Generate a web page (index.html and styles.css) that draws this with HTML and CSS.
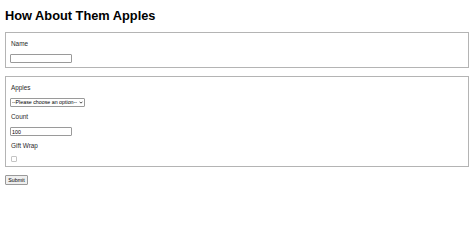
FILE: index.html
```html
<!DOCTYPE html>
<html lang="en">
<head>
<meta charset="utf-8">
<title>How About Them Apples</title>
<link rel="stylesheet" href="styles.css">
</head>
<body>
<h1 class="title">How About Them Apples</h1>
<form class="order-form">
  <fieldset class="group">
    <div class="field">
      <label class="field-label" for="name">Name</label>
      <input class="text-input" id="name" type="text">
    </div>
  </fieldset>
  <fieldset class="group">
    <div class="field">
      <label class="field-label" for="apples">Apples</label>
      <span class="select-wrap">
        <select class="select-input" id="apples">
          <option>--Please choose an option--</option>
        </select>
        <svg class="select-arrow" viewBox="0 0 6 4" width="4" height="3" aria-hidden="true"><path d="M0.8 0.8 L3 3 L5.2 0.8" fill="none" stroke="#222" stroke-width="1.2"/></svg>
      </span>
    </div>
    <div class="field">
      <label class="field-label" for="count">Count</label>
      <input class="text-input" id="count" type="text" value="100">
    </div>
    <div class="field">
      <label class="field-label" for="wrap">Gift Wrap</label>
      <input class="check-input" id="wrap" type="checkbox">
    </div>
  </fieldset>
  <button class="submit-btn" type="submit">Submit</button>
</form>
</body>
</html>
```

FILE: styles.css
```css
html, body {
  background: #ffffff;
}
body {
  margin: 0;
  padding: 0 5px;
  font-family: "Liberation Sans", Arial, sans-serif;
  color: #111;
}
.title {
  margin: 8px 0 9px;
  font-size: 12.8px;
  line-height: 15px;
  font-weight: 700;
  color: #000;
}
.order-form {
  display: flex;
  flex-direction: column;
  align-items: flex-start;
}
.group {
  align-self: stretch;
  margin: 0 0 8px;
  padding: 7px 4px 4px;
  border: 1px solid #b4b4b4;
  min-width: 0;
  display: flex;
  flex-direction: column;
  gap: 6px;
}
.field {
  display: flex;
  flex-direction: column;
  align-items: flex-start;
}
.field-label {
  display: block;
  font-size: 6.4px;
  line-height: 8px;
  margin: 0 0 6px 1px;
  color: #2a2a2a;
}
.text-input {
  box-sizing: border-box;
  width: 62px;
  height: 9px;
  margin: 0;
  padding: 0 1px;
  font-family: "Liberation Sans", Arial, sans-serif;
  font-size: 5.3px;
  line-height: 7px;
  border: 1px solid #9a9a9a;
  border-radius: 1px;
  background: #fff;
  color: #000;
}
.select-wrap {
  position: relative;
  display: inline-block;
  line-height: 0;
}
.select-input {
  appearance: none;
  -webkit-appearance: none;
  box-sizing: border-box;
  width: 75px;
  height: 9px;
  margin: 0;
  padding: 0 6px 0 1px;
  font-family: "Liberation Sans", Arial, sans-serif;
  font-size: 5.3px;
  line-height: 7px;
  border: 1px solid #9a9a9a;
  border-radius: 1px;
  background: #fff;
  color: #000;
}
.select-arrow {
  position: absolute;
  right: 2px;
  top: 3px;
  pointer-events: none;
}
.check-input {
  appearance: none;
  -webkit-appearance: none;
  box-sizing: border-box;
  width: 6px;
  height: 6px;
  margin: 0 0 0 1px;
  border: 1px solid #c4c4c4;
  border-radius: 1px;
  background: #fff;
}
.submit-btn {
  box-sizing: border-box;
  width: 23px;
  height: 10px;
  margin: 0;
  padding: 0;
  font-family: "Liberation Sans", Arial, sans-serif;
  font-size: 5.3px;
  line-height: 8px;
  border: 1px solid #9a9a9a;
  border-radius: 1px;
  background: #efefef;
  color: #000;
}
```
